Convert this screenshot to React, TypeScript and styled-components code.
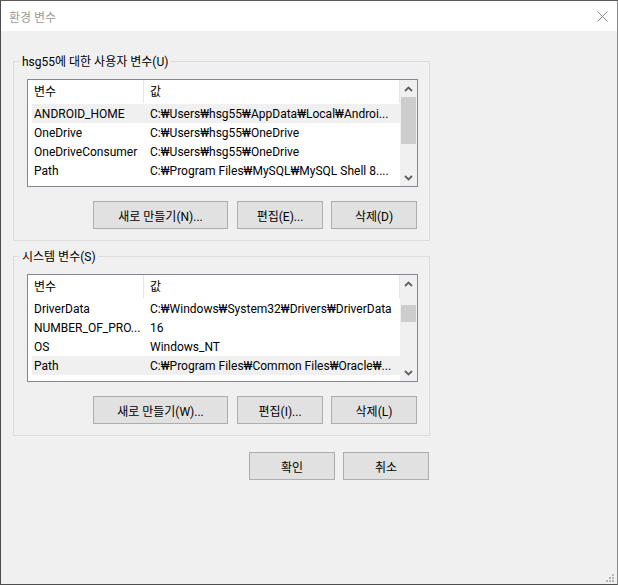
import React from "react";
import styled, { createGlobalStyle } from "styled-components";

const Global = createGlobalStyle`
  html, body { margin: 0; padding: 0; background: #f0f0f0; }
  body {
    font-family: Roboto, "Noto Sans CJK KR", sans-serif;
    font-size: 12px;
    color: #000;
  }
  * { box-sizing: border-box; }
`;

const Window = styled.div`
  position: relative;
  width: 618px;
  height: 585px;
  border: 1px solid #4d4d4d;
  border-top-color: #5a5a5a;
  border-right-color: #8a8a8a;
  background: #f0f0f0;
  display: flex;
  flex-direction: column;
  overflow: hidden;
`;

const TitleBar = styled.div`
  height: 30px;
  flex: none;
  background: #fff;
  display: flex;
  align-items: center;
  justify-content: space-between;
  padding-left: 8px;
  padding-right: 9px;
  color: #9a9a9a;
  font-size: 12px;
`;

const Body = styled.div`
  flex: 1;
  padding: 21px 0 0 12px;
  display: flex;
  flex-direction: column;
  width: 429px;
`;

const Group = styled.fieldset<{ $mt?: number }>`
  margin: ${(p) => p.$mt ?? 0}px 0 0 0;
  padding: 9px 11px 11px 13px;
  border: 1px solid #dcdcdc;
  width: 417px;
  min-width: 0;
  display: flex;
  flex-direction: column;
  gap: 14px;
`;

const Legend = styled.legend`
  padding: 2px 2px 0 2px;
  margin-left: -7px;
  line-height: 16px;
  font-size: 12px;
`;

const ListView = styled.div`
  width: 391px;
  height: 108px;
  border: 1px solid #828790;
  background: #fff;
  display: flex;
`;

const ListArea = styled.div`
  flex: 1;
  overflow: hidden;
  display: flex;
  flex-direction: column;
`;

const HeaderRow = styled.div`
  height: 24px;
  flex: none;
  display: flex;
`;

const HeaderCell = styled.div<{ $w?: number }>`
  ${(p) => (p.$w ? `width: ${p.$w}px; flex: none;` : "flex: 1;")}
  padding-left: 6px;
  padding-top: 1px;
  line-height: 22px;
  border-right: 1px solid #e5e5e5;
  margin-bottom: 1px;
  white-space: nowrap;
`;

const Row = styled.div<{ $sel?: boolean }>`
  height: 19px;
  flex: none;
  margin-left: 4px;
  padding-top: 2px;
  display: flex;
  background: ${(p) => (p.$sel ? "#f0f0f0" : "transparent")};
  line-height: 17px;
  white-space: nowrap;
`;

const NameCell = styled.div`
  width: 111px;
  flex: none;
  padding-left: 2px;
  overflow: hidden;
`;

const ValueCell = styled.div`
  flex: 1;
  padding-left: 7px;
  overflow: hidden;
`;

const ScrollBar = styled.div`
  width: 17px;
  flex: none;
  background: #f0f0f0;
  display: flex;
  flex-direction: column;
`;

const Arrow = styled.div`
  height: 17px;
  flex: none;
  display: flex;
  align-items: center;
  justify-content: center;
`;

const Track = styled.div`
  flex: 1;
  padding: 0 1px;
`;

const Thumb = styled.div<{ $top: number; $h: number }>`
  margin-top: ${(p) => p.$top}px;
  height: ${(p) => p.$h}px;
  background: #cdcdcd;
`;

const ButtonRow = styled.div`
  display: flex;
  justify-content: flex-end;
  gap: 8px;
  padding-right: 1px;
`;

const Button = styled.button<{ $w: number; $mr?: number }>`
  width: ${(p) => p.$w}px;
  height: 28px;
  border: 1px solid #adadad;
  background: #e1e1e1;
  font-family: Roboto, "Noto Sans CJK KR", sans-serif;
  font-size: 12px;
  color: #000;
  padding: 0;
  margin: 0 ${(p) => p.$mr ?? 0}px 0 0;
  border-radius: 0;
`;

const DialogButtons = styled.div`
  display: flex;
  justify-content: flex-end;
  gap: 8px;
  margin-top: 16px;
  padding-right: 1px;
`;

const Grip = styled.svg`
  position: absolute;
  right: 2px;
  bottom: 1px;
`;

const Up = () => (
  <svg width="9" height="6" viewBox="0 0 9 6">
    <path d="M1 5 L4.5 1.5 L8 5" fill="none" stroke="#606060" strokeWidth="1.8" />
  </svg>
);
const Down = () => (
  <svg width="9" height="6" viewBox="0 0 9 6">
    <path d="M1 1 L4.5 4.5 L8 1" fill="none" stroke="#606060" strokeWidth="1.8" />
  </svg>
);

type Item = { name: string; value: string; sel?: boolean };

const VarList = ({ items, thumbTop, thumbH }: { items: Item[]; thumbTop: number; thumbH: number }) => (
  <ListView>
    <ListArea>
      <HeaderRow>
        <HeaderCell $w={116}>변수</HeaderCell>
        <HeaderCell>값</HeaderCell>
      </HeaderRow>
      {items.map((it) => (
        <Row key={it.name} $sel={it.sel}>
          <NameCell>{it.name}</NameCell>
          <ValueCell>{it.value}</ValueCell>
        </Row>
      ))}
    </ListArea>
    <ScrollBar>
      <Arrow>
        <Up />
      </Arrow>
      <Track>
        <Thumb $top={thumbTop} $h={thumbH} />
      </Track>
      <Arrow>
        <Down />
      </Arrow>
    </ScrollBar>
  </ListView>
);

const W = "\u20A9";

const userVars: Item[] = [
  { name: "ANDROID_HOME", value: `C:${W}Users${W}hsg55${W}AppData${W}Local${W}Androi...`, sel: true },
  { name: "OneDrive", value: `C:${W}Users${W}hsg55${W}OneDrive` },
  { name: "OneDriveConsumer", value: `C:${W}Users${W}hsg55${W}OneDrive` },
  { name: "Path", value: `C:${W}Program Files${W}MySQL${W}MySQL Shell 8....` },
];

const sysVars: Item[] = [
  { name: "DriverData", value: `C:${W}Windows${W}System32${W}Drivers${W}DriverData` },
  { name: "NUMBER_OF_PRO...", value: "16" },
  { name: "OS", value: "Windows_NT" },
  { name: "Path", value: `C:${W}Program Files${W}Common Files${W}Oracle${W}...`, sel: true },
];

export default function App() {
  return (
    <>
      <Global />
      <Window>
        <TitleBar>
          <span>환경 변수</span>
          <svg width="11" height="11" viewBox="0 0 11 11">
            <path d="M0.5 0.5 L10.5 10.5 M10.5 0.5 L0.5 10.5" stroke="#8a8a8a" strokeWidth="1" fill="none" />
          </svg>
        </TitleBar>
        <Body>
          <Group>
            <Legend>hsg55에 대한 사용자 변수(U)</Legend>
            <VarList items={userVars} thumbTop={0} thumbH={47} />
            <ButtonRow>
              <Button $w={135} $mr={1}>새로 만들기(N)...</Button>
              <Button $w={86}>편집(E)...</Button>
              <Button $w={86}>삭제(D)</Button>
            </ButtonRow>
          </Group>
          <Group $mt={6}>
            <Legend>시스템 변수(S)</Legend>
            <VarList items={sysVars} thumbTop={13} thumbH={17} />
            <ButtonRow>
              <Button $w={135} $mr={1}>새로 만들기(W)...</Button>
              <Button $w={86}>편집(I)...</Button>
              <Button $w={86}>삭제(L)</Button>
            </ButtonRow>
          </Group>
          <DialogButtons>
            <Button $w={86}>확인</Button>
            <Button $w={86}>취소</Button>
          </DialogButtons>
        </Body>
        <Grip width="10" height="10" viewBox="0 0 10 10">
          <g fill="#b5b5b5">
            <rect x="7" y="1" width="2" height="2" />
            <rect x="4" y="4" width="2" height="2" />
            <rect x="7" y="4" width="2" height="2" />
            <rect x="1" y="7" width="2" height="2" />
            <rect x="4" y="7" width="2" height="2" />
            <rect x="7" y="7" width="2" height="2" />
          </g>
        </Grip>
      </Window>
    </>
  );
}
